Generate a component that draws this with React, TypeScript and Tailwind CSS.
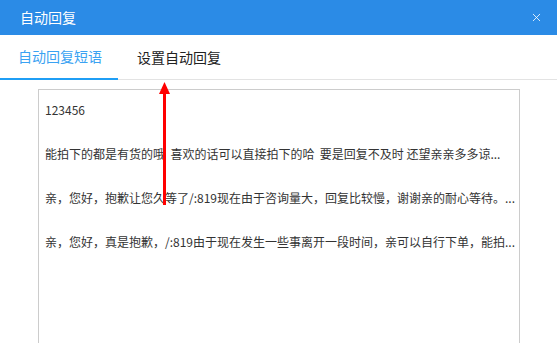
import { X } from "lucide-react"

// texts are already shortened with "..." the way the list shows them
const replies: Array<string> = [
    "123456",
    "能拍下的都是有货的哦  喜欢的话可以直接拍下的哈  要是回复不及时 还望亲亲多多谅...",
    "亲，您好，抱歉让您久等了/:819现在由于咨询量大，回复比较慢，谢谢亲的耐心等待。...",
    "亲，您好，真是抱歉，/:819由于现在发生一些事离开一段时间，亲可以自行下单，能拍...",
]

const App = () => {
    const font = "font-['Microsoft_YaHei','Noto_Sans_CJK_SC',sans-serif]"
    return (
        <div className={`${font} relative w-[557px] h-[343px] overflow-hidden bg-white`}>
            {/* header */}
            <div className="h-[35px] bg-[#2b8be6] flex items-center justify-between pl-[20px] pr-[14px] text-white">
                <span className="text-[14px]">自动回复</span>
                <X className="w-[13px] h-[13px]" strokeWidth={1.5} />
            </div>

            {/* tabs */}
            <div className="h-[45px] flex border-b border-[#e3e3e3] text-[14px]">
                <div className="w-[118px] pl-[18px] flex items-center text-[#3aa2f2] border-b-2 border-[#1f9ef5] -mb-px">自动回复短语</div>
                <div className="pl-[19px] flex items-center text-[#222]">设置自动回复</div>
            </div>

            {/* list */}
            <div className="mt-[9px] ml-[38px] w-[482px] h-[300px] border border-[#cccccc] px-[6px]">
                {replies.map((item, key) => (
                    <div key={key} className="h-[44px] pt-[10px] leading-[20px] text-[12px] text-[#333] whitespace-pre">
                        {item}
                    </div>
                ))}
            </div>

            {/* red arrow */}
            <svg className="absolute left-[158px] top-[82px]" width="13" height="124" viewBox="0 0 13 124">
                <polygon points="6.5,0 12,12 1,12" fill="#ff0000" />
                <rect x="5" y="10" width="3" height="113" fill="#ff0000" />
            </svg>
        </div>
    )
}

export default App
